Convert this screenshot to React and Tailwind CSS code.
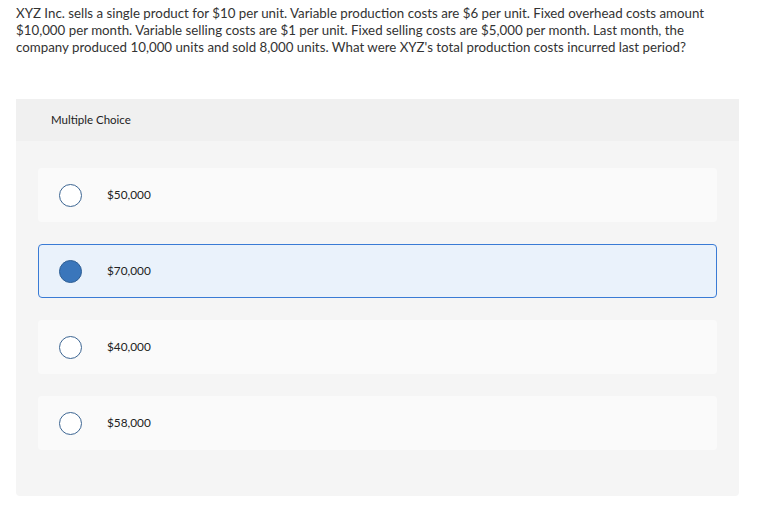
export default function App() {
  const options = ["$50,000", "$70,000", "$40,000", "$58,000"];
  const selected = 1;

  return (
    <div className="w-[762px] h-[510px] bg-white font-['Lato',sans-serif] text-[#333]">
      <p className="pl-4 pt-[5px] text-[13.3px] leading-[17px] text-[#333]">
        XYZ Inc. sells a single product for $10 per unit. Variable production costs are $6 per unit. Fixed overhead costs amount
        <br />
        $10,000 per month. Variable selling costs are $1 per unit. Fixed selling costs are $5,000 per month. Last month, the
        <br />
        company produced 10,000 units and sold 8,000 units. What were XYZ's total production costs incurred last period?
      </p>

      <div className="ml-4 mt-[43px] w-[723px] h-[397px] bg-[#f5f5f5] rounded-sm">
        <div className="h-[42px] bg-[#f0f0f0] flex items-center pl-[35px] text-[11.5px] text-[#222]">
          Multiple Choice
        </div>
        <div className="flex flex-col gap-[22px] pt-[27px] px-[22px]">
          {options.map((opt, i) => (
            <div
              key={opt}
              className={
                i === selected
                  ? "h-[54px] flex items-center rounded-sm border border-[#3a7bd5] bg-[#eaf2fb] pl-[20px]"
                  : "h-[54px] flex items-center rounded-sm border border-transparent bg-[#fafafa] pl-[20px]"
              }
            >
              <span
                className={
                  i === selected
                    ? "w-[23px] h-[23px] rounded-full border border-[#2f5f94] bg-[#3a76bb]"
                    : "w-[23px] h-[23px] rounded-full border border-[#3c6592] bg-white"
                }
              />
              <span className="ml-[15px] pl-[10px] text-[11.8px] text-[#222]">{opt}</span>
            </div>
          ))}
        </div>
      </div>
    </div>
  );
}
